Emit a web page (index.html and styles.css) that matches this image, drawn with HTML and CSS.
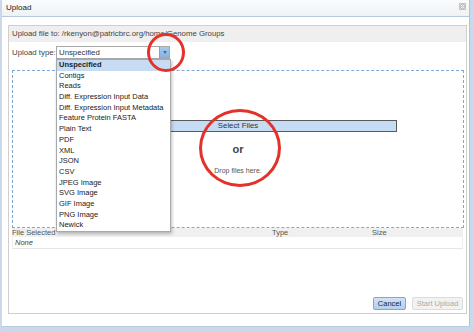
FILE: index.html
```html
<!doctype html>
<html>
<head>
	<meta charset="utf-8" />
	<title>Upload</title>
	<link rel="stylesheet" href="styles.css">
</head>
<body>
	<div class="dialog">
		<div class="titlebar">
			<span class="title">Upload</span>
			<svg class="close" width="7" height="7" viewBox="0 0 7 7">
				<rect x="0" y="0" width="7" height="7" fill="#c4c4c4" />
				<path d="M1.5 1.5 L5.5 5.5 M5.5 1.5 L1.5 5.5" stroke="#f2f2f2" stroke-width="1" />
			</svg>
		</div>
		<div class="dialog-body">
			<div class="panel">
				<div class="panel-head">Upload file to: /rkenyon@patricbrc.org/home/Genome Groups</div>
				<div class="type-row">
					<label>Upload type:</label>
					<div class="select">
						<span class="select-value">Unspecified</span>
						<span class="select-arrow">
							<svg width="4" height="3" viewBox="0 0 4 3"><path d="M0 0 L4 0 L2 3 Z" fill="#3f6f9f" /></svg>
						</span>
						<ul class="options">
							<li class="selected">Unspecified</li>
							<li>Contigs</li>
							<li>Reads</li>
							<li>Diff. Expression Input Data</li>
							<li>Diff. Expression Input Metadata</li>
							<li>Feature Protein FASTA</li>
							<li>Plain Text</li>
							<li>PDF</li>
							<li>XML</li>
							<li>JSON</li>
							<li>CSV</li>
							<li>JPEG Image</li>
							<li>SVG Image</li>
							<li>GIF Image</li>
							<li>PNG Image</li>
							<li>Newick</li>
						</ul>
					</div>
				</div>
				<div class="dropzone">
					<div class="select-files">Select Files</div>
					<div class="or">or</div>
					<div class="drop-hint">Drop files here.</div>
				</div>
				<div class="file-table">
					<div class="file-head">
						<span>File Selected</span>
						<span>Type</span>
						<span>Size</span>
					</div>
					<div class="file-row">
						<span class="none">None</span>
						<span></span>
						<span></span>
					</div>
				</div>
				<div class="actions">
					<span class="btn btn-cancel">Cancel</span>
					<span class="btn btn-disabled">Start Upload</span>
				</div>
			</div>
		</div>
	</div>
	<div class="mark mark-arrow"></div>
	<div class="mark mark-drop"></div>
</body>
</html>
```

FILE: styles.css
```css
html, body { margin: 0; padding: 0; }
body {
	position: relative;
	width: 474px;
	height: 331px;
	overflow: hidden;
	background: #c9d9ea;
	font: 7.5px/1 "Liberation Sans", Arial, sans-serif;
	color: #333;
}

.dialog {
	margin: 0 4px 0 2px;
	height: 327px;
	background: #fff;
	border-right: 1px solid #adc3da;
	border-bottom: 1px solid #b9cde0;
	box-sizing: border-box;
}

.titlebar {
	height: 17px;
	box-sizing: border-box;
	display: flex;
	align-items: center;
	justify-content: space-between;
	padding: 0 3px 1px 4px;
	background: linear-gradient(#fbfcfd, #eef2f6);
	border-bottom: 1px solid #b6c8db;
}
.title { font-size: 8px; color: #222; }
.close { margin-top: -3px; }

.dialog-body { padding: 8px 0 0 6px; }

.panel {
	width: 459px;
	height: 289px;
	box-sizing: border-box;
	border: 1px solid #cfcfcf;
	display: flex;
	flex-direction: column;
}

.panel-head {
	height: 16px;
	line-height: 16px;
	padding-left: 3px;
	background: #efefef;
	color: #444;
	font-size: 7.8px;
}

.type-row {
	display: flex;
	align-items: center;
	height: 13px;
	margin-top: 4px;
	padding-left: 3px;
}
.type-row label { width: 44px; color: #444; font-size: 7.8px; }

.select {
	position: relative;
	width: 114px;
	height: 13px;
	box-sizing: border-box;
	border: 1px solid #a9a9a9;
	display: flex;
	align-items: center;
	background: #fff;
}
.select-value { flex: 1; padding-left: 2px; font-size: 7.8px; }
.select-arrow {
	width: 9px;
	height: 11px;
	display: flex;
	align-items: center;
	justify-content: center;
	background: linear-gradient(#a9c9ec, #86b0de);
	border-left: 1px solid #7aa3cf;
}

.options {
	position: absolute;
	top: 12px;
	left: -1px;
	width: 115px;
	margin: 0;
	padding: 0;
	list-style: none;
	background: #fff;
	border: 1px solid #a9a9a9;
	box-sizing: border-box;
	box-shadow: 1px 2px 3px rgba(0, 0, 0, 0.25);
	z-index: 2;
}
.options li {
	height: 10.7px;
	line-height: 10.7px;
	padding-left: 2px;
	color: #222;
	white-space: nowrap;
}
.options li.selected {
	font-weight: bold;
	background: #c7dcf3;
}

.dropzone {
	margin: 11px 2px 0 3px;
	height: 158px;
	box-sizing: border-box;
	border: 1px dashed #7ea9d6;
	display: flex;
	flex-direction: column;
	align-items: center;
}
.select-files {
	margin-top: 49px;
	width: 318px;
	height: 12px;
	box-sizing: border-box;
	line-height: 10px;
	text-align: center;
	background: #c6dcf5;
	border: 1px solid #5a5a5a;
	color: #333;
	font-size: 7.8px;
}
.or {
	margin-top: 10px;
	line-height: 14px;
	font-size: 11px;
	font-weight: bold;
	color: #444;
}
.drop-hint {
	margin-top: 10px;
	line-height: 10px;
	font-size: 7px;
	color: #555;
}

.file-table { margin: 0 3px; }
.file-head, .file-row {
	display: grid;
	grid-template-columns: 260px 100px 1fr;
}
.file-head {
	height: 9px;
	line-height: 9px;
	background: #f0f0f0;
	color: #555;
}
.file-row {
	height: 11px;
	line-height: 11px;
	border-bottom: 1px solid #e6e6e6;
	border-left: 1px solid #eee;
	border-right: 1px solid #eee;
	padding-left: 2px;
}
.none { font-style: italic; color: #444; }

.actions {
	margin-top: auto;
	display: flex;
	justify-content: flex-end;
	gap: 6px;
	padding: 0 3px 3px 0;
}
.btn {
	height: 13px;
	line-height: 11px;
	box-sizing: border-box;
	padding: 0;
	border-radius: 2px;
	text-align: center;
	white-space: nowrap;
}
.btn-cancel {
	width: 33px;
	background: linear-gradient(#cfe2f6, #b3d0ee);
	border: 1px solid #7fa8d2;
	color: #223;
}
.btn-disabled {
	width: 51px;
	background: #f2f2f2;
	border: 1px solid #dcdcdc;
	color: #aaa;
}

.mark {
	position: absolute;
	box-sizing: border-box;
	border: 3px solid #e4322b;
	border-radius: 50%;
	z-index: 5;
}
.mark-arrow { left: 147px; top: 33px; width: 38px; height: 39px; }
.mark-drop { left: 199px; top: 109px; width: 82px; height: 78px; }
```
